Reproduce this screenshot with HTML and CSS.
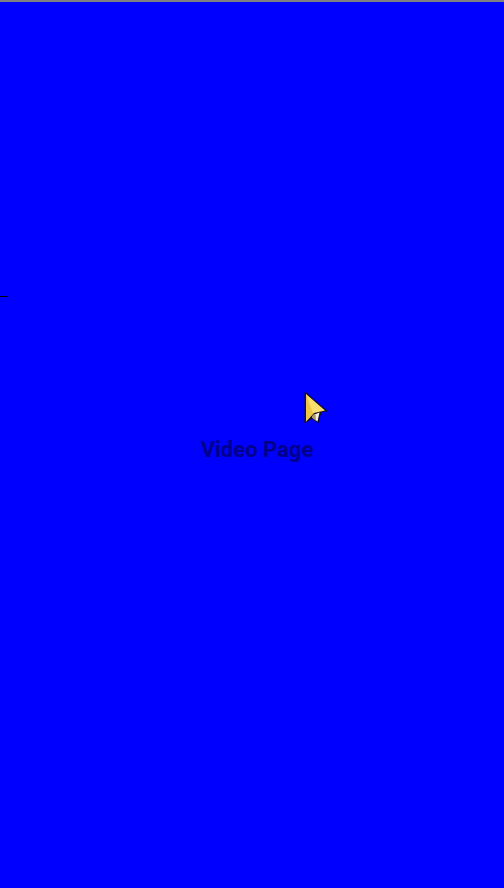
FILE: index.html
```html
<!DOCTYPE html>
<html lang="en">
<head>
<meta charset="utf-8">
<title>Video Page</title>
<link rel="stylesheet" href="styles.css">
</head>
<body>
<div class="topbar"></div>
<main class="page">
  <span class="tick"></span>
  <svg class="cursor" width="24" height="38" viewBox="0 0 24 38" aria-hidden="true">
    <path d="M1 5 L23 24 L17 24.500 L14 36 L8 31 L1 36 Z" fill="#14122a" stroke="#14122a" stroke-width="1" stroke-linejoin="round"/>
    <path d="M2 7 L21 23.500 L10 26 L2 34.500 Z" fill="#f9df6e"/>
    <path d="M2 7 L9 26.500 L2 34.500 Z" fill="#eec544"/>
    <path d="M9 28 L15.500 25.500 L13.500 34.500 L8 30.500 Z" fill="#f2eee0"/>
    <path d="M9 28 L11.500 27 L12 33.500 L8 30.500 Z" fill="#b09a5a"/>
  </svg>
  <h1 class="title">Video Page</h1>
</main>
</body>
</html>
```
FILE: styles.css
```css
html, body {
  margin: 0;
  height: 100%;
}
body {
  display: flex;
  flex-direction: column;
  background: #0000ff;
  overflow: hidden;
}
.topbar {
  height: 2px;
  background: #808080;
  flex: none;
}
.page {
  position: relative;
  flex: 1;
  display: flex;
  align-items: center;
  justify-content: center;
  padding: 10px 0 0 10px;
  box-sizing: border-box;
}
.title {
  margin: 0;
  font: 700 22px/24px Roboto, sans-serif;
  color: #00008c;
}
.tick {
  position: absolute;
  left: 0;
  top: 294px;
  width: 8px;
  height: 1px;
  background: #000;
}
.cursor {
  position: absolute;
  left: 304px;
  top: 385px;
}
```
